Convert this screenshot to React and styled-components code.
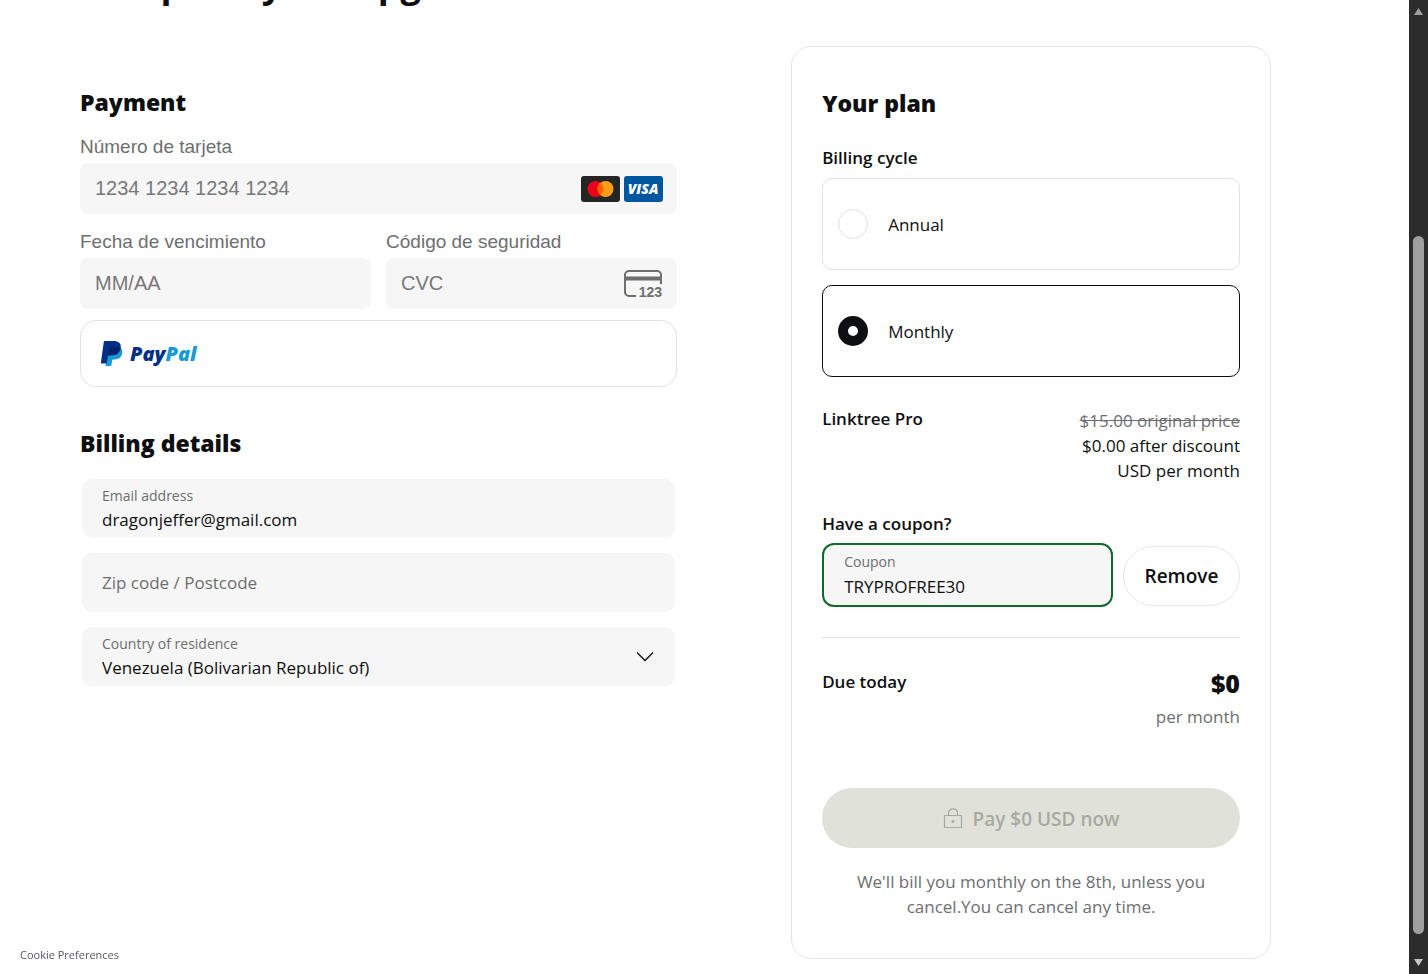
import React, { useState } from 'react';
import styled, { createGlobalStyle } from 'styled-components';

const GlobalStyle = createGlobalStyle`
  * {
    box-sizing: border-box;
  }

  body {
    margin: 0;
    background: #ffffff;
    color: #0e0f10;
    font-family: 'Open Sans', 'Noto Sans', sans-serif;
    font-size: 17px;
    line-height: 25px;
  }

  button,
  input,
  select {
    font-family: inherit;
    color: inherit;
  }
`;

const Page = styled.div`
  display: grid;
  grid-template-columns: minmax(0, 1fr) 19px;
  min-height: 100vh;
`;

const Content = styled.main`
  padding: 0 138px 15px 80px;
`;

const Title = styled.h1`
  display: flex;
  align-items: flex-end;
  height: 8px;
  margin: 0 0 38px;
  overflow: hidden;
  font-size: 36px;
  font-weight: 700;
  line-height: 48px;
`;

const Columns = styled.div`
  display: grid;
  grid-template-columns: minmax(0, 56fr) minmax(0, 45fr);
  gap: 114px;
`;

const Left = styled.div`
  padding-top: 40px;
`;

const Heading = styled.h2`
  margin: 0;
  font-size: 23px;
  font-weight: 800;
  line-height: 32px;
`;

const CardForm = styled.div`
  display: grid;
  grid-template-columns: repeat(2, minmax(0, 1fr));
  gap: 15px;
  margin-top: 16px;
  font-family: 'Liberation Sans', Arial, sans-serif;
`;

const CardField = styled.div`
  grid-column: ${(props) => (props.$wide ? '1 / -1' : 'auto')};
`;

const CardLabel = styled.label`
  display: block;
  margin-bottom: 4px;
  color: #6d6e70;
  font-size: 19px;
  line-height: 25px;
`;

const CardBox = styled.div`
  display: flex;
  align-items: center;
  gap: 4px;
  height: 51px;
  padding: 0 14px 0 15px;
  border-radius: 8px;
  background: #f6f6f6;
`;

const CardInput = styled.input`
  flex: 1;
  min-width: 0;
  padding: 0;
  border: 0;
  outline: 0;
  background: transparent;
  font-size: 20px;

  &::placeholder {
    color: #77787a;
  }
`;

const PayPalButton = styled.button`
  display: flex;
  align-items: center;
  width: 100%;
  height: 67px;
  margin: 11px 0 40px;
  padding: 0 19px;
  border: 1px solid #e0e2e4;
  border-radius: 16px;
  background: #ffffff;
`;

const Fields = styled.div`
  display: grid;
  gap: 15px;
  margin: 20px 2px 0;
`;

const Field = styled.div`
  position: relative;
  display: flex;
  flex: 1;
  flex-direction: column;
  justify-content: center;
  min-width: 0;
  height: ${(props) => (props.$valid ? '64px' : '59px')};
  padding: 0 20px;
  border: ${(props) => (props.$valid ? '2px solid #10682b' : '0')};
  border-radius: ${(props) => (props.$valid ? '12px' : '10px')};
  background: #f6f6f6;
`;

const FieldLabel = styled.label`
  color: #6c6e70;
  font-size: 14px;
  line-height: 22px;
`;

const FieldInput = styled.input`
  width: 100%;
  height: 26px;
  padding: 0;
  border: 0;
  outline: 0;
  background: transparent;
  font-size: 17px;

  &::placeholder {
    color: #6c6e70;
  }
`;

const FieldSelect = styled.select`
  width: 100%;
  height: 26px;
  padding: 0;
  border: 0;
  outline: 0;
  appearance: none;
  background: transparent;
  font-size: 17px;
`;

const Chevron = styled.svg`
  position: absolute;
  top: 24px;
  right: 21px;
  pointer-events: none;
`;

const Plan = styled.section`
  padding: 40px 30px 39px;
  border: 1px solid #e4e5e7;
  border-radius: 20px;
`;

const Cycle = styled.fieldset`
  display: grid;
  gap: 15px;
  margin: 26px 0 29px;
  padding: 0;
  border: 0;
`;

const Legend = styled.legend`
  margin-bottom: 8px;
  padding: 0;
  font-weight: 600;
`;

const Option = styled.label`
  display: flex;
  align-items: center;
  gap: 20px;
  height: 92px;
  padding: 0 15px;
  border: 1px solid ${(props) => (props.$checked ? '#0e0f10' : '#dfe1e3')};
  border-radius: 10px;
`;

const Radio = styled.input`
  width: 30px;
  height: 30px;
  margin: 0;
  appearance: none;
  border: 1px solid #dfe1e3;
  border-radius: 50%;
  background: #ffffff;

  &:checked {
    border: 10px solid #0e0f10;
  }
`;

const Row = styled.div`
  display: flex;
  justify-content: space-between;
`;

const Label = styled.div`
  font-weight: 600;
`;

const Price = styled.div`
  padding-top: 2px;
  text-align: right;

  s {
    color: #6c6e70;
  }
`;

const CouponLabel = styled(Label)`
  margin: 28px 0 7px;
`;

const Coupon = styled.div`
  display: flex;
  align-items: center;
  gap: 10px;
`;

const Remove = styled.button`
  width: 117px;
  height: 60px;
  margin-top: 2px;
  padding: 0;
  border: 1px solid #e4e5e7;
  border-radius: 30px;
  background: #ffffff;
  font-size: 19px;
  font-weight: 600;
`;

const Divider = styled.hr`
  margin: 30px 0 31px;
  border: 0;
  border-top: 1px solid #dfe1e3;
`;

const Total = styled.div`
  text-align: right;

  strong {
    display: block;
    font-size: 25px;
    font-weight: 800;
    line-height: 28px;
  }

  span {
    display: block;
    margin-top: 7px;
    color: #6c6e70;
  }
`;

const Pay = styled.button`
  display: flex;
  align-items: center;
  justify-content: center;
  gap: 10px;
  width: 100%;
  height: 60px;
  margin: 59px 0 21px;
  padding: 2px 0 0;
  border: 0;
  border-radius: 30px;
  background: #e0e2d9;
  font-size: 19px;
  font-weight: 600;

  &:disabled {
    color: #a8aaa2;
  }
`;

const Note = styled.p`
  margin: 0;
  padding: 0 20px;
  color: #6c6e70;
  text-align: center;
`;

const CookieLink = styled.a`
  position: fixed;
  bottom: 11px;
  left: 20px;
  color: #55585c;
  font-size: 11px;
  line-height: 16px;
  text-decoration: none;
`;

const Scrollbar = styled.div`
  position: sticky;
  top: 0;
  display: flex;
  flex-direction: column;
  align-items: center;
  height: 100vh;
  padding: 8px 0;
  background: #2c2c2c;
`;

const Thumb = styled.div`
  flex: 1;
  width: 11px;
  margin: 221px 0 25px;
  border-radius: 6px;
  background: #9f9f9f;
`;

const Mastercard = () => (
  <svg width="39" height="26" viewBox="0 0 39 26" role="img" aria-label="Mastercard">
    <rect width="39" height="26" rx="3" fill="#252525" />
    <circle cx="14.5" cy="13" r="8" fill="#eb001b" />
    <circle cx="24.5" cy="13" r="8" fill="#f79e1b" />
    <path d="M19.5 6.75a8 8 0 0 1 0 12.5 8 8 0 0 1 0-12.5Z" fill="#ff5f00" />
  </svg>
);

const Visa = () => (
  <svg width="39" height="26" viewBox="0 0 39 26" role="img" aria-label="Visa">
    <rect width="39" height="26" rx="3" fill="#00579f" />
    <text
      x="19"
      y="18"
      fill="#ffffff"
      fontFamily="Open Sans, sans-serif"
      fontSize="14"
      fontStyle="italic"
      fontWeight="800"
      textAnchor="middle"
    >
      VISA
    </text>
  </svg>
);

const CvcIcon = () => (
  <svg width="40" height="30" viewBox="0 0 40 30" fill="none" aria-hidden="true">
    <path
      d="M13 27H6a4 4 0 0 1-4-4V6a4 4 0 0 1 4-4h28a4 4 0 0 1 4 4v9"
      stroke="#6d6e70"
      strokeWidth="2"
    />
    <path d="M2 9.5h36" stroke="#6d6e70" strokeWidth="4" />
    <text
      x="39"
      y="28"
      fill="#6d6e70"
      fontFamily="Liberation Sans, sans-serif"
      fontSize="14"
      fontWeight="700"
      textAnchor="end"
    >
      123
    </text>
  </svg>
);

const PayPalLogo = () => (
  <svg width="104" height="30" viewBox="0 0 104 30" role="img" aria-label="PayPal">
    <path
      d="M20.4 8.8c1.7 1.2 2.3 3 1.8 5.4-.8 4.3-3.5 6.2-7.8 6.2h-1.2c-.5 0-.9.4-1 .9l-.8 5c-.1.5-.5.8-1 .8H6.2c-.4 0-.7-.3-.6-.7l.7-4.4L8.8 9Z"
      fill="#179bd7"
    />
    <path
      d="M4.6 2h8.9c4.9 0 8 2.2 7.2 6.9-.9 5.1-4.2 7.4-9 7.4H9.1c-.6 0-1.1.4-1.2 1l-1.2 7.2H1.6c-.5 0-.8-.4-.7-.8L3.8 2.7c.1-.4.4-.7.8-.7Z"
      fill="#003087"
    />
    <path
      d="M20.5 8.8c-.9 5.2-4.1 7.5-9 7.5H9.1c-.6 0-1.1.4-1.2 1l1.3-7.9c.1-.5.5-.9 1-.9h7c1.2 0 2.3.1 3.3.3Z"
      fill="#012169"
    />
    <text
      x="30"
      y="22"
      fontFamily="Open Sans, sans-serif"
      fontSize="20"
      fontStyle="italic"
      fontWeight="800"
    >
      <tspan fill="#003087">Pay</tspan>
      <tspan fill="#179bd7">Pal</tspan>
    </text>
  </svg>
);

const LockIcon = () => (
  <svg width="20" height="22" viewBox="0 0 20 22" fill="none" stroke="currentColor" aria-hidden="true">
    <path d="M1.5 7.5h17v12h-17Z M5.5 7.5V5.2C5.5 2.6 7.4.8 10 .8s4.5 1.8 4.5 4.4v2.3" strokeWidth="1.2" />
    <circle cx="10" cy="13.5" r="1" fill="currentColor" />
  </svg>
);

const App = () => {
  const [cycle, setCycle] = useState('Monthly');

  return (
    <Page>
      <GlobalStyle />
      <Content>
        <Title>Complete your upgrade</Title>
        <Columns>
          <Left>
            <Heading>Payment</Heading>
            <CardForm>
              <CardField $wide>
                <CardLabel htmlFor="number">Número de tarjeta</CardLabel>
                <CardBox>
                  <CardInput id="number" placeholder="1234 1234 1234 1234" />
                  <Mastercard />
                  <Visa />
                </CardBox>
              </CardField>
              <CardField>
                <CardLabel htmlFor="expiry">Fecha de vencimiento</CardLabel>
                <CardBox>
                  <CardInput id="expiry" placeholder="MM/AA" />
                </CardBox>
              </CardField>
              <CardField>
                <CardLabel htmlFor="cvc">Código de seguridad</CardLabel>
                <CardBox>
                  <CardInput id="cvc" placeholder="CVC" />
                  <CvcIcon />
                </CardBox>
              </CardField>
            </CardForm>
            <PayPalButton type="button">
              <PayPalLogo />
            </PayPalButton>

            <Heading>Billing details</Heading>
            <Fields>
              <Field>
                <FieldLabel htmlFor="email">Email address</FieldLabel>
                <FieldInput id="email" type="email" defaultValue="dragonjeffer@gmail.com" />
              </Field>
              <Field>
                <FieldInput aria-label="Zip code / Postcode" placeholder="Zip code / Postcode" />
              </Field>
              <Field>
                <FieldLabel htmlFor="country">Country of residence</FieldLabel>
                <FieldSelect id="country">
                  <option>Venezuela (Bolivarian Republic of)</option>
                </FieldSelect>
                <Chevron width="18" height="12" viewBox="0 0 18 12" fill="none" aria-hidden="true">
                  <path d="m1 1.5 8 8 8-8" stroke="#0e0f10" strokeWidth="1.3" />
                </Chevron>
              </Field>
            </Fields>
          </Left>

          <Plan>
            <Heading>Your plan</Heading>
            <Cycle>
              <Legend>Billing cycle</Legend>
              {['Annual', 'Monthly'].map((name) => (
                <Option key={name} $checked={cycle === name}>
                  <Radio
                    type="radio"
                    name="cycle"
                    checked={cycle === name}
                    onChange={() => setCycle(name)}
                  />
                  {name}
                </Option>
              ))}
            </Cycle>
            <Row>
              <Label>Linktree Pro</Label>
              <Price>
                <s>$15.00 original price</s>
                <div>$0.00 after discount</div>
                <div>USD per month</div>
              </Price>
            </Row>
            <CouponLabel>Have a coupon?</CouponLabel>
            <Coupon>
              <Field $valid>
                <FieldLabel htmlFor="coupon">Coupon</FieldLabel>
                <FieldInput id="coupon" defaultValue="TRYPROFREE30" />
              </Field>
              <Remove type="button">Remove</Remove>
            </Coupon>
            <Divider />
            <Row>
              <Label>Due today</Label>
              <Total>
                <strong>$0</strong>
                <span>per month</span>
              </Total>
            </Row>
            <Pay type="submit" disabled>
              <LockIcon />
              Pay $0 USD now
            </Pay>
            <Note>We'll bill you monthly on the 8th, unless you cancel.You can cancel any time.</Note>
          </Plan>
        </Columns>
        <CookieLink href="#cookies">Cookie Preferences</CookieLink>
      </Content>
      <Scrollbar aria-hidden="true">
        <svg width="9" height="7" viewBox="0 0 9 7">
          <path d="M4.5 0 9 7H0Z" fill="#9f9f9f" />
        </svg>
        <Thumb />
        <svg width="9" height="7" viewBox="0 0 9 7">
          <path d="M0 0h9L4.5 7Z" fill="#c4c4c4" />
        </svg>
      </Scrollbar>
    </Page>
  );
};

export default App;
